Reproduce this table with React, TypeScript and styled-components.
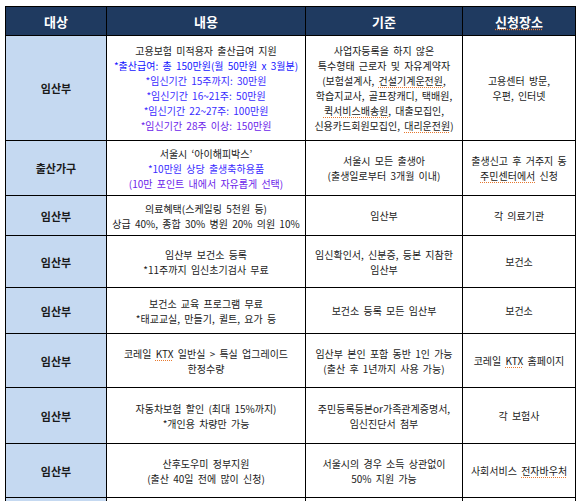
import React from "react";
import styled, { createGlobalStyle } from "styled-components";

const Global = createGlobalStyle`
  html, body { margin: 0; padding: 0; background: #fff; overflow: hidden; }
  body { font-family: "Noto Sans CJK KR", "Noto Sans", sans-serif; }
`;

const Page = styled.div`
  padding: 6px 0 0 5px;
`;

const Table = styled.table`
  width: 570px;
  border-collapse: collapse;
  table-layout: fixed;
`;

const HeadCell = styled.th`
  background: #1f3a60;
  color: #fff;
  font-size: 13px;
  font-weight: 700;
  height: 28px;
  padding: 0;
  border: 1px solid #000;
  text-align: center;
`;

const LabelCell = styled.td`
  background: #c5d9f1;
  border: 1px solid #000;
  text-align: center;
  font-size: 11px;
  font-weight: 700;
  color: #1a1a1a;
  padding: 0;
`;

const Cell = styled.td`
  border: 1px solid #000;
  text-align: center;
  vertical-align: middle;
  font-size: 10px;
  line-height: 15px;
  color: #1a1a1a;
  padding: 0 2px;
  word-spacing: 2px;
  white-space: nowrap;
  overflow: hidden;
`;

const Row = styled.tr<{ $h: number }>`
  height: ${(p) => p.$h}px;
`;

const Line = styled.div<{ $c?: string }>`
  color: ${(p) => p.$c || "inherit"};
`;

const Squiggle = styled.span`
  text-decoration: underline dotted #e8792f;
  text-underline-offset: 2px;
`;

const BLUE = "#1414ff";
const VIOLET = "#3a2cff";
const PURPLE = "#6c24ea";

type L = React.ReactNode | { t: React.ReactNode; c: string };

const lines = (arr: L[]) =>
  arr.map((l, i) =>
    l && typeof l === "object" && "t" in (l as any) ? (
      <Line key={i} $c={(l as any).c}>
        {(l as any).t}
      </Line>
    ) : (
      <Line key={i}>{l as React.ReactNode}</Line>
    )
  );

type R = { h: number; label: string; a: L[]; b: L[]; c: L[] };

const rows: R[] = [
  {
    h: 105,
    label: "임산부",
    a: [
      "고용보험 미적용자 출산급여 지원",
      { t: "*출산급여: 총 150만원(월 50만원 x 3월분)", c: BLUE },
      { t: "*임신기간 15주까지: 30만원", c: VIOLET },
      { t: "*임신기간 16~21주: 50만원", c: VIOLET },
      { t: "*임신기간 22~27주: 100만원", c: VIOLET },
      { t: "*임신기간 28주 이상: 150만원", c: PURPLE },
    ],
    b: [
      "사업자등록을 하지 않은",
      "특수형태 근로자 및 자유계약자",
      <>
        (보험설계사, <Squiggle>건설기계운전원</Squiggle>,
      </>,
      "학습지교사, 골프장캐디, 택배원,",
      <>
        <Squiggle>퀵서비스배송원</Squiggle>, 대출모집인,
      </>,
      <>
        신용카드회원모집인, <Squiggle>대리운전원</Squiggle>)
      </>,
    ],
    c: ["고용센터 방문,", "우편, 인터넷"],
  },
  {
    h: 55,
    label: "출산가구",
    a: [
      "서울시 ‘아이해피박스’",
      { t: "*10만원 상당 출생축하용품", c: VIOLET },
      { t: "(10만 포인트 내에서 자유롭게 선택)", c: PURPLE },
    ],
    b: ["서울시 모든 출생아", "(출생일로부터 3개월 이내)"],
    c: [
      "출생신고 후 거주지 동",
      <>
        <Squiggle>주민센터에서</Squiggle> 신청
      </>,
    ],
  },
  {
    h: 40,
    label: "임산부",
    a: ["의료혜택(스케일링 5천원 등)", "상급 40%, 종합 30% 병원 20% 의원 10%"],
    b: ["임산부"],
    c: ["각 의료기관"],
  },
  {
    h: 52,
    label: "임산부",
    a: ["임산부 보건소 등록", "*11주까지 임신초기검사 무료"],
    b: ["임신확인서, 신분증, 등본 지참한", "임산부"],
    c: ["보건소"],
  },
  {
    h: 46,
    label: "임산부",
    a: ["보건소 교육 프로그램 무료", "*태교교실, 만들기, 퀼트, 요가 등"],
    b: ["보건소 등록 모든 임산부"],
    c: ["보건소"],
  },
  {
    h: 54,
    label: "임산부",
    a: [
      <>
        코레일 <Squiggle>KTX</Squiggle> 일반실 &gt; 특실 업그레이드
      </>,
      "한정수량",
    ],
    b: ["임산부 본인 포함 동반 1인 가능", "(출산 후 1년까지 사용 가능)"],
    c: [
      <>
        코레일 <Squiggle>KTX</Squiggle> 홈페이지
      </>,
    ],
  },
  {
    h: 56,
    label: "임산부",
    a: ["자동차보험 할인 (최대 15%까지)", "*개인용 차량만 가능"],
    b: ["주민등록등본or가족관계증명서,", "임신진단서 첨부"],
    c: ["각 보험사"],
  },
  {
    h: 54,
    label: "임산부",
    a: ["산후도우미 정부지원", "(출산 40일 전에 많이 신청)"],
    b: ["서울시의 경우 소득 상관없이", "50% 지원 가능"],
    c: [
      <>
        사회서비스 <Squiggle>전자바우처</Squiggle>
      </>,
    ],
  },
];

export default function App() {
  return (
    <>
      <Global />
      <Page>
        <Table>
          <colgroup>
            <col style={{ width: 101 }} />
            <col style={{ width: 199 }} />
            <col style={{ width: 157 }} />
            <col style={{ width: 113 }} />
          </colgroup>
          <thead>
            <Row $h={29}>
              <HeadCell>대상</HeadCell>
              <HeadCell>내용</HeadCell>
              <HeadCell>기준</HeadCell>
              <HeadCell>
                <Squiggle>신청장소</Squiggle>
              </HeadCell>
            </Row>
          </thead>
          <tbody>
            {rows.map((r, i) => (
              <Row key={i} $h={r.h}>
                <LabelCell>{r.label}</LabelCell>
                <Cell>{lines(r.a)}</Cell>
                <Cell>{lines(r.b)}</Cell>
                <Cell>{lines(r.c)}</Cell>
              </Row>
            ))}
            <Row $h={40}>
              <LabelCell />
              <Cell />
              <Cell />
              <Cell />
            </Row>
          </tbody>
        </Table>
      </Page>
    </>
  );
}
